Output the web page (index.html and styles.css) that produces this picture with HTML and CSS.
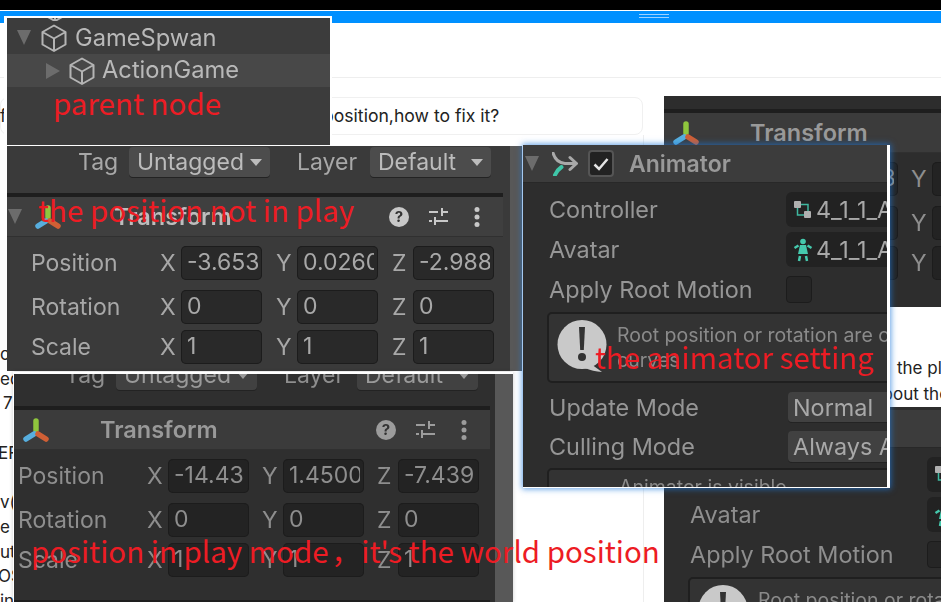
FILE: index.html
```html
<!DOCTYPE html>
<html lang="en">
<head>
    <meta charset="UTF-8">
    <title>Animator position question</title>
    <link rel="stylesheet" href="styles.css">
</head>
<body>
    <!-- Forum page behind the pasted screenshots -->
    <div class="topbar"><span class="handle"></span></div>
    <div class="subnav"></div>
    <div class="question">
        <span class="question-start">f</span>
        <span>position,how to fix it?</span>
    </div>
    <div class="post">
        <div class="post-main">
            <p>o</p>
            <p>ed</p>
            <p class="indent">7</p>
            <p>&nbsp;</p>
            <p class="outdent">EF</p>
            <p>&nbsp;</p>
            <p>v(</p>
            <p>e</p>
            <p>ut</p>
            <p class="outdent">OS</p>
            <p>in</p>
        </div>
        <div class="post-side">
            <p>the player</p>
            <p class="pull">about the</p>
        </div>
    </div>

    <!-- Back right: transform in play mode -->
    <div class="win win-back-top inspector">
        <div class="win-main">
            <section class="transform">
                <div class="comp-sep"></div>
                <div class="comp-head">
                    <svg class="axis-icon" viewBox="0 0 26 24"><path class="ax-g" d="M13 3v9"/><path class="ax-b" d="M3 21l8-5"/><path class="ax-o" d="M15 16l8 5"/></svg>
                    <b class="comp-title">Transform</b>
                </div>
                <div class="vec-row">
                    <span class="prop-label">Position</span>
                    <div class="axis"><span>X</span><div class="field"><span>-14.43</span></div></div>
                    <div class="axis"><span>Y</span><div class="field"><span>1.4500</span></div></div>
                </div>
                <div class="vec-row gap-rot">
                    <span class="prop-label">Rotation</span>
                    <div class="axis"><span>X</span><div class="field"><span>0</span></div></div>
                    <div class="axis"><span>Y</span><div class="field"><span>0</span></div></div>
                </div>
                <div class="vec-row gap-scale">
                    <span class="prop-label">Scale</span>
                    <div class="axis"><span>X</span><div class="field"><span>1</span></div></div>
                    <div class="axis"><span>Y</span><div class="field"><span>1</span></div></div>
                </div>
            </section>
        </div>
    </div>

    <!-- Back right: animator in play mode -->
    <div class="win win-back-bottom animator">
        <div class="anim-head"></div>
        <div class="anim-row first">
            <span class="prop-label">Controller</span>
            <div class="ref-field">
                <svg class="ref-icon" viewBox="0 0 20 20"><path class="ctl-line" d="M8 4.500h7v6.500M4.500 8v7h6.500"/><rect class="ctl-box" x="1" y="1" width="7" height="7" rx="1"/><rect class="ctl-box" x="11" y="11" width="7" height="7" rx="1"/></svg>
            </div>
        </div>
        <div class="anim-row">
            <span class="prop-label">Avatar</span>
            <div class="ref-field">
                <svg class="ref-icon" viewBox="0 0 20 24"><circle class="av-fill" cx="10" cy="3.500" r="2.800"/><path class="av-fill" d="M7 7h6l2 9H5z"/><path class="av-line" d="M1.500 10l4-2.500M14.500 7.500l4 2.500M7 18l-1 5M13 18l1 5"/></svg>
            </div>
        </div>
        <div class="anim-row check-row">
            <span class="prop-label">Apply Root Motion</span>
            <span class="check-empty"></span>
        </div>
        <div class="help-box">
            <svg class="warn-icon" viewBox="0 0 50 54"><path class="warn-bg" d="M34 44l11 8c-6-.500-12-1.500-17-4z"/><circle class="warn-bg" cx="25" cy="24.500" r="24.500"/><path class="warn-mark" d="M22 7h6l-1.200 23h-3.600z"/><circle class="warn-mark" cx="25" cy="37" r="4"/></svg>
            <p class="help-text">Root position or rotation are controlled by<br>curves</p>
        </div>
    </div>

    <!-- Inspector: the position not in play -->
    <div class="win win-edit inspector">
        <div class="win-main">
            <div class="tag-row">
                <span class="tag-label">Tag</span>
                <div class="dropdown dd-tag">Untagged<i class="caret"></i></div>
                <span class="layer-label">Layer</span>
                <div class="dropdown dd-layer">Default<i class="caret"></i></div>
            </div>
            <section class="transform">
                <div class="comp-sep"></div>
                <div class="comp-head">
                    <i class="tri-down"></i>
                    <svg class="axis-icon" viewBox="0 0 26 24"><path class="ax-g" d="M13 3v9"/><path class="ax-b" d="M3 21l8-5"/><path class="ax-o" d="M15 16l8 5"/></svg>
                    <b class="comp-title">Transform</b>
                    <div class="head-tools">
                        <span class="help-dot">?</span>
                        <svg class="sliders" viewBox="0 0 19 19"><path d="M0 5h9M13 1v8M13 5h6M0 14h3M6 10v8M6 14h13"/></svg>
                        <svg class="dots" viewBox="0 0 6 20"><circle cx="3" cy="2.500" r="2.500"/><circle cx="3" cy="10" r="2.500"/><circle cx="3" cy="17.500" r="2.500"/></svg>
                    </div>
                </div>
                <div class="vec-row">
                    <span class="prop-label">Position</span>
                    <div class="axis"><span>X</span><div class="field"><span>-3.6535</span></div></div>
                    <div class="axis"><span>Y</span><div class="field"><span>0.02600</span></div></div>
                    <div class="axis"><span>Z</span><div class="field"><span>-2.988</span></div></div>
                </div>
                <div class="vec-row gap-rot">
                    <span class="prop-label">Rotation</span>
                    <div class="axis"><span>X</span><div class="field"><span>0</span></div></div>
                    <div class="axis"><span>Y</span><div class="field"><span>0</span></div></div>
                    <div class="axis"><span>Z</span><div class="field"><span>0</span></div></div>
                </div>
                <div class="vec-row gap-scale">
                    <span class="prop-label">Scale</span>
                    <div class="axis"><span>X</span><div class="field"><span>1</span></div></div>
                    <div class="axis"><span>Y</span><div class="field"><span>1</span></div></div>
                    <div class="axis"><span>Z</span><div class="field"><span>1</span></div></div>
                </div>
            </section>
        </div>
        <div class="scrollbar"></div>
    </div>

    <!-- Inspector: position in play mode -->
    <div class="win win-play inspector">
        <div class="win-main">
            <div class="tag-row">
                <span class="tag-label">Tag</span>
                <div class="dropdown dd-tag">Untagged<i class="caret"></i></div>
                <span class="layer-label">Layer</span>
                <div class="dropdown dd-layer">Default<i class="caret"></i></div>
            </div>
            <section class="transform">
                <div class="comp-sep"></div>
                <div class="comp-head">
                    <svg class="axis-icon" viewBox="0 0 26 24"><path class="ax-g" d="M13 3v9"/><path class="ax-b" d="M3 21l8-5"/><path class="ax-o" d="M15 16l8 5"/></svg>
                    <b class="comp-title">Transform</b>
                    <div class="head-tools">
                        <span class="help-dot">?</span>
                        <svg class="sliders" viewBox="0 0 19 19"><path d="M0 5h9M13 1v8M13 5h6M0 14h3M6 10v8M6 14h13"/></svg>
                        <svg class="dots" viewBox="0 0 6 20"><circle cx="3" cy="2.500" r="2.500"/><circle cx="3" cy="10" r="2.500"/><circle cx="3" cy="17.500" r="2.500"/></svg>
                    </div>
                </div>
                <div class="vec-row">
                    <span class="prop-label">Position</span>
                    <div class="axis"><span>X</span><div class="field"><span>-14.435</span></div></div>
                    <div class="axis"><span>Y</span><div class="field"><span>1.45000</span></div></div>
                    <div class="axis"><span>Z</span><div class="field"><span>-7.4399</span></div></div>
                </div>
                <div class="vec-row gap-rot">
                    <span class="prop-label">Rotation</span>
                    <div class="axis"><span>X</span><div class="field"><span>0</span></div></div>
                    <div class="axis"><span>Y</span><div class="field"><span>0</span></div></div>
                    <div class="axis"><span>Z</span><div class="field"><span>0</span></div></div>
                </div>
                <div class="vec-row gap-scale">
                    <span class="prop-label">Scale</span>
                    <div class="axis"><span>X</span><div class="field"><span>1</span></div></div>
                    <div class="axis"><span>Y</span><div class="field"><span>1</span></div></div>
                    <div class="axis"><span>Z</span><div class="field"><span>1</span></div></div>
                </div>
            </section>
            <div class="comp-sep end-sep"></div>
        </div>
        <div class="scrollbar"></div>
    </div>

    <!-- Animator settings -->
    <div class="win win-anim animator">
        <div class="anim-head">
            <i class="tri-down"></i>
            <svg class="anim-icon" viewBox="0 0 26 24"><path class="anim-curve" d="M1 1c2 7 6 10 12 10.500h11M18 5.500l6.500 6-6.500 6"/><path class="anim-teal" d="M9.500 15c-3 2-5 4.500-6.500 8"/></svg>
            <span class="check-on"><svg viewBox="0 0 16 14"><path d="M1.500 7.500l4.500 4.500 8.500-10"/></svg></span>
            <b class="comp-title">Animator</b>
        </div>
        <div class="anim-row first">
            <span class="prop-label">Controller</span>
            <div class="ref-field">
                <svg class="ref-icon" viewBox="0 0 20 20"><path class="ctl-line" d="M8 4.500h7v6.500M4.500 8v7h6.500"/><rect class="ctl-box" x="1" y="1" width="7" height="7" rx="1"/><rect class="ctl-box" x="11" y="11" width="7" height="7" rx="1"/></svg>
                <span>4_1_1_Action</span>
            </div>
        </div>
        <div class="anim-row">
            <span class="prop-label">Avatar</span>
            <div class="ref-field">
                <svg class="ref-icon" viewBox="0 0 20 24"><circle class="av-fill" cx="10" cy="3.500" r="2.800"/><path class="av-fill" d="M7 7h6l2 9H5z"/><path class="av-line" d="M1.500 10l4-2.500M14.500 7.500l4 2.500M7 18l-1 5M13 18l1 5"/></svg>
                <span>4_1_1_Action</span>
            </div>
        </div>
        <div class="anim-row check-row">
            <span class="prop-label">Apply Root Motion</span>
            <span class="check-empty"></span>
        </div>
        <div class="help-box">
            <svg class="warn-icon" viewBox="0 0 50 54"><path class="warn-bg" d="M34 44l11 8c-6-.500-12-1.500-17-4z"/><circle class="warn-bg" cx="25" cy="24.500" r="24.500"/><path class="warn-mark" d="M22 7h6l-1.200 23h-3.600z"/><circle class="warn-mark" cx="25" cy="37" r="4"/></svg>
            <p class="help-text">Root position or rotation are controlled by<br>curves</p>
        </div>
        <div class="anim-row mode-row">
            <span class="prop-label">Update Mode</span>
            <div class="dropdown dd-mode">Normal</div>
        </div>
        <div class="anim-row mode-row second">
            <span class="prop-label">Culling Mode</span>
            <div class="dropdown dd-mode">Always Animate</div>
        </div>
        <div class="visible-box">Animator is visible</div>
    </div>

    <!-- Hierarchy crop -->
    <div class="win win-tree">
        <div class="tree-stub">
            <svg class="cube" viewBox="0 0 26 28"><path d="M13 1.500l11.500 6.500v12.500l-11.500 6.500-11.500-6.500v-12.500zM1.500 8l11.500 6.500 11.500-6.500M13 14.500v12.500"/></svg>
        </div>
        <div class="tree-row">
            <i class="tri-down"></i>
            <svg class="cube" viewBox="0 0 26 28"><path d="M13 1.500l11.500 6.500v12.500l-11.500 6.500-11.500-6.500v-12.500zM1.500 8l11.500 6.500 11.500-6.500M13 14.500v12.500"/></svg>
            <span>GameSpwan</span>
        </div>
        <div class="tree-row child">
            <i class="tri-right"></i>
            <svg class="cube" viewBox="0 0 26 28"><path d="M13 1.500l11.500 6.500v12.500l-11.500 6.500-11.500-6.500v-12.500zM1.500 8l11.500 6.500 11.500-6.500M13 14.500v12.500"/></svg>
            <span>ActionGame</span>
        </div>
    </div>

    <!-- Red notes typed over the screenshots -->
    <span class="note note-parent">parent node</span>
    <span class="note note-edit">the position not in play</span>
    <span class="note note-anim">the animator setting</span>
    <span class="note note-play">position in play mode <span class="note-comma">，</span> it's the world position</span>
</body>
</html>
```

FILE: styles.css
```css
html, body {
    height: 100%;
    overflow: hidden;
}
body {
    margin: 0;
    background-color: #fff;
    font-family: Inter, "Liberation Sans", sans-serif;
    color: #222;
}
p {
    margin: 0;
}

/* Forum page */
.topbar {
    height: 13px;
    border-top: 10px solid #000;
    box-shadow: inset 0 1px 0 #fff;
    background-color: #0090ff;
    display: flex;
}
.handle {
    width: 30px;
    height: 2px;
    margin: 4px 0 0 639px;
    border-top: 1px solid #9fd2ff;
    border-bottom: 1px solid #9fd2ff;
}
.subnav {
    height: 54px;
    border-bottom: 1px solid #eee;
}
.question {
    width: 643px;
    height: 38px;
    box-sizing: border-box;
    margin-top: 19px;
    padding-bottom: 2px;
    border: 1px solid #f0f0f0;
    border-radius: 8px;
    display: flex;
    align-items: center;
    font-size: 17.600px;
    white-space: nowrap;
}
.question-start {
    width: 323px;
    margin-left: -1px;
}
.post {
    display: flex;
    height: 467px;
    font-size: 17px;
    line-height: 24.700px;
    white-space: nowrap;
}
.post-main {
    width: 643px;
    border-right: 1px solid #eee;
    padding-top: 207px;
    flex: none;
}
.indent {
    padding-left: 3px;
}
.outdent {
    margin-left: -2px;
}
.post-side {
    padding: 221px 0 0 253px;
}
.pull {
    margin-left: -24px;
    margin-top: 1px;
}

/* Pasted screenshots */
.win {
    position: absolute;
    overflow: hidden;
    box-sizing: border-box;
    display: flex;
    color: #a8a8a8;
    font-size: 23px;
    white-space: nowrap;
    filter: blur(0.35px);
}
.win-main {
    flex: none;
    height: 100%;
    box-sizing: border-box;
}
.scrollbar {
    flex: 1;
    background-color: #585858;
}

.win-tree {
    left: 4px;
    top: 16px;
    width: 328px;
    height: 130px;
    flex-direction: column;
    padding: 2px 2px 0 3px;
    background-color: #3c3c3c;
    border-bottom: 1px solid #fff;
    box-shadow: inset 3px 2px 0 #fff, inset -2px 0 0 #fff;
    font-size: 23.700px;
}
.win-edit {
    left: 7px;
    top: 146px;
    width: 515px;
    height: 225px;
    background-color: #3a3a3a;
    --pad: 24px;
    --step: 116px;
    --ink: #a8a8a8;
    --field: #292929;
    --head: #3f3f3f;
}
.win-edit .win-main {
    width: 503px;
    padding-right: 7px;
}
.win-play {
    left: 13px;
    top: 372px;
    width: 500px;
    height: 230px;
    border-top: 2px solid #fff;
    border-left: 1px solid #fff;
    background-color: #2f2f2f;
    --pad: 4px;
    --step: 115px;
    --ink: #8e8e8e;
    --field: #232323;
    --head: #3b3b3b;
    box-shadow: 0 0 4px rgba(0, 0, 0, 0.2);
}
.win-play .win-main {
    width: 481px;
    padding-right: 5px;
}
.win-back-top {
    left: 664px;
    top: 96px;
    width: 277px;
    height: 211px;
    padding-top: 13px;
    background-color: #2d2d2d;
    --pad: 3px;
    --step: 115px;
    --ink: #8e8e8e;
    --field: #232323;
    --head: #3b3b3b;
}
.win-back-top .win-main {
    width: 477px;
}
.win-back-top .field {
    padding-left: 9px;
}
.win-back-bottom {
    left: 664px;
    top: 407px;
    width: 277px;
    height: 195px;
    padding-top: 3px;
    --anim-ink: #8e8e8e;
}
.win-anim {
    left: 523px;
    top: 145px;
    width: 367px;
    height: 343px;
    border-right: 3px solid #fff;
    border-bottom: 1px solid #fff;
    box-shadow: 0 0 6px 1px rgba(30, 120, 220, 0.7);
    --anim-ink: #969696;
}

/* Tree rows */
.tree-stub {
    height: 3px;
    overflow: hidden;
    padding-left: 35px;
}
.tree-stub .cube {
    margin-top: -24px;
    display: block;
}
.tree-row {
    height: 33px;
    flex: none;
    display: flex;
    align-items: center;
    gap: 10px;
    padding-left: 10px;
    color: #b9b9b9;
}
.tree-row.child {
    background-color: #484848;
    padding-left: 39px;
    gap: 9px;
}
.tree-row span {
    margin-left: -2px;
}
.tree-row.child span {
    padding-bottom: 3px;
}
.cube {
    width: 26px;
    height: 28px;
    flex: none;
    fill: none;
    stroke: #b4b4b4;
    stroke-width: 2;
    stroke-linejoin: round;
}
.tri-down {
    flex: none;
    border-left: 7.500px solid transparent;
    border-right: 7.500px solid transparent;
    border-top: 15px solid #6c6c6c;
}
.tri-right {
    flex: none;
    border-top: 8px solid transparent;
    border-bottom: 8px solid transparent;
    border-left: 14px solid #6c6c6c;
}

/* Tag and layer */
.tag-row {
    display: flex;
    align-items: center;
    height: 30px;
    margin: 1px 0 16px;
    padding-left: calc(var(--pad) + 47px);
    color: var(--ink);
}
.win-play .tag-row {
    margin-top: -14px;
}
.tag-label {
    width: 51px;
}
.layer-label {
    width: 73px;
    margin-left: 27px;
}
.dropdown {
    display: flex;
    align-items: center;
    box-sizing: border-box;
    height: 30px;
    padding: 0 8px;
    background-color: #4c4c4c;
    border-radius: 4px;
    box-shadow: 0 1px 0 #232323;
    color: #bcbcbc;
}
.win-play .dropdown {
    background-color: #414141;
    color: #9a9a9a;
}
.dd-tag {
    width: 141px;
}
.dd-layer {
    width: 121px;
}
.caret {
    margin-left: auto;
    border-left: 6.500px solid transparent;
    border-right: 6.500px solid transparent;
    border-top: 7px solid currentColor;
}

/* Transform component */
.comp-sep {
    height: 4px;
    background-color: #1e1e1e;
}
.end-sep {
    margin-top: 23px;
}
.comp-head {
    height: 39px;
    display: flex;
    align-items: center;
    padding-right: 23px;
    background-color: var(--head);
    box-shadow: 0 1px 0 #303030;
}
.comp-head .tri-down {
    margin-left: 1px;
    margin-right: 13px;
}
.win-play .axis-icon, .win-back-top .axis-icon {
    margin-left: 9px;
}
.axis-icon {
    width: 26px;
    height: 24px;
    flex: none;
    fill: none;
    stroke-width: 5.500;
    stroke-linecap: round;
}
.ax-g {
    stroke: #8fc63d;
}
.ax-b {
    stroke: #57aede;
}
.ax-o {
    stroke: #cf5f35;
}
.comp-title {
    margin-left: 51px;
    color: #999;
    font-size: 23.500px;
    font-weight: 600;
}
.win-edit .comp-title {
    margin-left: 53px;
    color: #bdbdbd;
}
.head-tools {
    margin-left: auto;
    display: flex;
    align-items: center;
    color: #9c9c9c;
}
.win-edit .head-tools {
    color: #c8c8c8;
}
.help-dot {
    width: 20px;
    height: 20px;
    border-radius: 50%;
    background-color: currentColor;
    font-size: 15px;
    font-weight: 700;
    line-height: 20px;
    text-align: center;
}
.help-dot::first-line {
    color: #333;
}
.sliders {
    width: 19px;
    height: 19px;
    margin-left: 20px;
    fill: none;
    stroke: currentColor;
    stroke-width: 2;
}
.dots {
    width: 6px;
    height: 20px;
    margin-left: 26px;
    fill: currentColor;
}
.vec-row {
    display: flex;
    align-items: center;
    height: 34px;
    margin-top: 10px;
    padding-left: var(--pad);
    color: var(--ink);
}
.gap-scale {
    margin-top: 6px;
}
.prop-label {
    width: 129px;
    flex: none;
}
.axis {
    width: var(--step);
    flex: none;
    display: flex;
    align-items: center;
}
.axis > span {
    width: 21px;
    flex: none;
}
.field {
    width: 81px;
    height: 34px;
    box-sizing: border-box;
    padding: 0 4px 0 6px;
    border-radius: 5px;
    background-color: var(--field);
    box-shadow: inset 0 0 0 1px #1c1c1c;
    line-height: 33px;
}
.field span {
    display: block;
    overflow: hidden;
}

/* Animator component */
.animator {
    flex-direction: column;
    background-color: #2d2d2d;
    color: var(--anim-ink);
    font-size: 23.400px;
}
.anim-head {
    height: 37px;
    flex: none;
    display: flex;
    align-items: center;
    padding-left: 2px;
    background-color: #3c3c3c;
    border-bottom: 1px solid #282828;
}
.anim-icon {
    width: 26px;
    height: 24px;
    margin-left: 13px;
    flex: none;
    fill: none;
    stroke-linecap: round;
    stroke-linejoin: round;
}
.anim-curve {
    stroke: #a9a9a9;
    stroke-width: 3;
}
.anim-teal {
    stroke: #3fc6a8;
    stroke-width: 4;
}
.check-on {
    width: 26px;
    height: 27px;
    flex: none;
    margin-left: 10px;
    box-sizing: border-box;
    display: flex;
    align-items: center;
    justify-content: center;
    border: 2px solid #555;
    border-radius: 4px;
    background-color: #222;
}
.check-on svg {
    width: 16px;
    height: 14px;
    fill: none;
    stroke: #e4e4e4;
    stroke-width: 2.500;
}
.animator .comp-title {
    margin-left: 15px;
    font-size: 23px;
}
.anim-row {
    flex: none;
    display: flex;
    align-items: center;
    height: 35px;
    margin-top: 5px;
    padding-left: 26px;
}
.anim-row.first {
    margin-top: 9px;
}
.anim-row .prop-label {
    width: 237px;
}
.ref-field {
    width: 240px;
    flex: none;
    height: 35px;
    display: flex;
    align-items: center;
    gap: 3px;
    padding-left: 7px;
    border-radius: 6px;
    background-color: #222;
    color: #a8a8a8;
}
.ref-icon {
    width: 20px;
    height: 24px;
    flex: none;
    fill: none;
}
.ctl-line {
    stroke: #3fb8a0;
    stroke-width: 1.500;
}
.ctl-box {
    fill: #b0b0b0;
}
.av-fill {
    fill: #45c9ad;
}
.av-line {
    stroke: #45c9ad;
    stroke-width: 2.500;
}
.check-empty {
    width: 26px;
    height: 27px;
    flex: none;
    box-sizing: border-box;
    border: 1px solid #1c1c1c;
    border-radius: 4px;
    background-color: #262626;
}
.help-box {
    flex: none;
    width: 420px;
    height: 71px;
    box-sizing: border-box;
    margin: 5px 0 0 24px;
    padding: 6px 0 0 8px;
    display: flex;
    gap: 10px;
    border: 2px solid #1f1f1f;
    border-radius: 5px;
    background-color: #333;
}
.warn-icon {
    width: 50px;
    height: 54px;
    flex: none;
}
.warn-bg {
    fill: #c9c9c9;
}
.warn-mark {
    fill: #333;
}
.help-text {
    margin-top: 3px;
    font-size: 19.500px;
    line-height: 25px;
    color: #8a8a8a;
}
.mode-row {
    height: 30px;
    margin-top: 9px;
}
.mode-row.second {
    height: 31px;
}
.mode-row .prop-label {
    width: 239px;
}
.dd-mode {
    flex: none;
    width: 200px;
    height: 100%;
    padding: 0 5px;
    background-color: #414141;
    color: #a8a8a8;
}
.visible-box {
    flex: none;
    width: 420px;
    height: 40px;
    box-sizing: border-box;
    margin: 6px 0 0 24px;
    padding-left: 70px;
    border: 2px solid #1f1f1f;
    border-radius: 5px;
    background-color: #333;
    font-size: 19.500px;
    line-height: 34px;
    color: #8a8a8a;
}

/* Red notes */
.note {
    position: absolute;
    color: #ed1c24;
    font-family: "Noto Sans CJK SC", sans-serif;
    font-size: 29.500px;
    line-height: 36px;
    white-space: nowrap;
}
.note-parent {
    left: 53px;
    top: 84px;
}
.note-edit {
    left: 38px;
    top: 191px;
}
.note-anim {
    left: 595px;
    top: 338px;
}
.note-play {
    left: 31px;
    top: 532px;
}
.note-comma {
    margin-left: -4px;
    letter-spacing: -6px;
}
```
